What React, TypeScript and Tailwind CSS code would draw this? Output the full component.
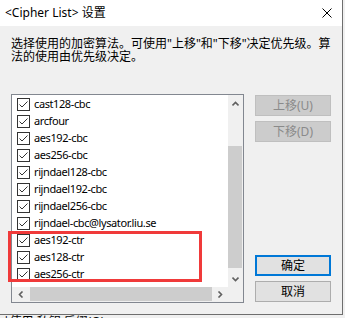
import React from "react";

const items = [
  "cast128-cbc",
  "arcfour",
  "aes192-cbc",
  "aes256-cbc",
  "rijndael128-cbc",
  "rijndael192-cbc",
  "rijndael256-cbc",
  "rijndael-cbc@lysator.liu.se",
  "aes192-ctr",
  "aes128-ctr",
  "aes256-ctr",
];

const font = { fontFamily: '"Noto Sans", "Noto Sans CJK SC", sans-serif' };

function CheckBox() {
  return (
    <svg width="13" height="13" viewBox="0 0 13 13" className="shrink-0">
      <rect x="0.5" y="0.5" width="12" height="12" fill="#fff" stroke="#333" />
      <polyline points="2.5,6.5 5,9 10.5,3.5" fill="none" stroke="#333" strokeWidth="1" />
    </svg>
  );
}

function Arrow({ dir }: { dir: "up" | "down" | "left" | "right" }) {
  const pts = {
    up: "0.5,4.5 3.5,1.5 6.5,4.5",
    down: "0.5,1.5 3.5,4.5 6.5,1.5",
    left: "4.5,0.5 1.5,3.5 4.5,6.5",
    right: "1.5,0.5 4.5,3.5 1.5,6.5",
  }[dir];
  const vert = dir === "up" || dir === "down";
  return (
    <svg width={vert ? 7 : 6} height={vert ? 6 : 7} viewBox={vert ? "0 0 7 6" : "0 0 6 7"}>
      <polyline points={pts} fill="none" stroke="#606060" strokeWidth="1.6" />
    </svg>
  );
}

function Btn({ label, kind }: { label: string; kind: "disabled" | "default" | "normal" }) {
  const cls =
    kind === "disabled"
      ? "border border-[#bfbfbf] bg-[#cccccc] text-[#8a8a8a]"
      : kind === "default"
        ? "border-2 border-[#0078d7] bg-[#e1e1e1] text-black"
        : "border border-[#adadad] bg-[#e1e1e1] text-black";
  return (
    <div className={`h-[21px] w-[76px] flex items-center justify-center text-[12px] ${cls}`}>
      {label}
    </div>
  );
}

export default function App() {
  return (
    <div className="relative w-[345px] h-[318px] overflow-hidden bg-[#f0f0f0]" style={font}>
      <div className="w-[343px] h-[315px] flex flex-col border-r border-b border-[#6e6e6e]">
        {/* title bar */}
        <div className="h-[26px] bg-white flex items-center justify-between pl-[5px] pr-[10px] shrink-0">
          <span className="text-[12px] text-black">&lt;Cipher List&gt; 设置</span>
          <svg width="10" height="10" viewBox="0 0 10 10">
            <path d="M0.5 0.5 L9.5 9.5 M9.5 0.5 L0.5 9.5" stroke="#000" strokeWidth="1" />
          </svg>
        </div>

        {/* body */}
        <div className="flex-1 bg-[#f0f0f0] pl-[11px] pt-[11px]">
          <div className="text-[12px] leading-[13px] text-black">
            <div>选择使用的加密算法。可使用"上移"和"下移"决定优先级。算</div>
            <div>法的使用由优先级决定。</div>
          </div>

          <div className="mt-[31px] flex gap-[11px]">
            {/* list box */}
            <div className="w-[233px] h-[209px] border border-[#828790] bg-white grid grid-cols-[1fr_15px] grid-rows-[1fr_15px]">
              <div className="overflow-hidden pt-px">
                {items.map((it) => (
                  <div key={it} className="h-[17px] flex items-center pl-[5px] gap-[4px]">
                    <CheckBox />
                    <span className="text-[11px] tracking-[-0.4px] text-black whitespace-nowrap">{it}</span>
                  </div>
                ))}
              </div>
              {/* vertical scrollbar */}
              <div className="bg-[#f0f0f0] flex flex-col">
                <div className="h-[17px] flex items-center justify-center">
                  <Arrow dir="up" />
                </div>
                <div className="flex-1 pr-px">
                  <div className="mt-[34px] h-[122px] bg-[#cdcdcd]" />
                </div>
                <div className="h-[17px] flex items-center justify-center">
                  <Arrow dir="down" />
                </div>
              </div>
              {/* horizontal scrollbar */}
              <div className="bg-[#f0f0f0] flex">
                <div className="w-[17px] flex items-center justify-center">
                  <Arrow dir="left" />
                </div>
                <div className="flex-1 pl-px pb-px">
                  <div className="h-full bg-[#cdcdcd]" />
                </div>
                <div className="w-[16px] flex items-center justify-center">
                  <Arrow dir="right" />
                </div>
              </div>
              <div className="bg-[#f0f0f0]" />
            </div>

            {/* buttons */}
            <div className="h-[209px] flex flex-col gap-[5px] py-px">
              <Btn label="上移(U)" kind="disabled" />
              <Btn label="下移(D)" kind="disabled" />
              <div className="mt-auto flex flex-col gap-[5px]">
                <Btn label="确定" kind="default" />
                <Btn label="取消" kind="normal" />
              </div>
            </div>
          </div>
        </div>
      </div>

      {/* window behind */}
      <div className="h-[3px] overflow-hidden pl-[3px] flex items-start">
        <span className="text-[12px] leading-[14px] text-black whitespace-nowrap">|使用 私钥 后缀(O)</span>
      </div>

      {/* red highlight */}
      <div className="absolute left-[8px] top-[231px] w-[194px] h-[51px] border-[3px] border-[#f03a3a]" />
    </div>
  );
}
